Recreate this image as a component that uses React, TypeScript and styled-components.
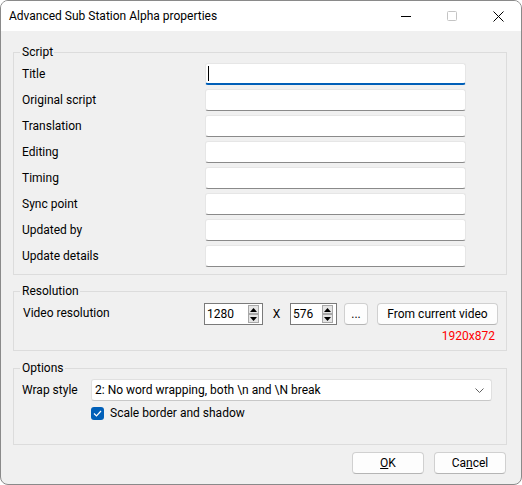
import React from "react";
import styled, { createGlobalStyle } from "styled-components";

const Global = createGlobalStyle`
  html, body { margin: 0; padding: 0; background: #ffffff; }
  body {
    font-family: Roboto, "Noto Sans", "Segoe UI", sans-serif;
    font-size: 12px;
    color: #000000;
  }
  * { box-sizing: border-box; }
`;

const Window = styled.div`
  width: 522px;
  height: 485px;
  display: flex;
  flex-direction: column;
  background: #f0f0f0;
  border: 1px solid #8a8a8a;
  border-radius: 8px;
  overflow: hidden;
`;

const TitleBar = styled.div`
  height: 30px;
  flex: none;
  display: flex;
  align-items: center;
  background: #ffffff;
`;

const TitleText = styled.div`
  flex: 1;
  padding-left: 8px;
  font-size: 12px;
  line-height: 16px;
`;

const CaptionButton = styled.div`
  width: 46px;
  height: 30px;
  display: flex;
  align-items: center;
  justify-content: center;
`;

const Body = styled.div`
  flex: 1;
  display: flex;
  flex-direction: column;
  padding: 13px 14px 0 12px;
`;

const Group = styled.fieldset<{ $pt: number; $pb: number; $mt?: number }>`
  margin: ${(p) => p.$mt ?? 0}px 0 0 0;
  padding: ${(p) => p.$pt}px 8px ${(p) => p.$pb}px 8px;
  border: 1px solid #dcdcdc;
  min-width: 0;
`;

const Legend = styled.legend`
  padding: 0 1px 0 2px;
  margin-left: -2px;
  line-height: 16px;
  font-size: 12px;
`;

const FormGrid = styled.div`
  display: grid;
  grid-template-columns: 183px 261px;
  grid-auto-rows: 22px;
  row-gap: 4px;
  align-items: center;
`;

const Label = styled.label`
  line-height: 16px;
  white-space: nowrap;
`;

const TextField = styled.div<{ $focused?: boolean }>`
  position: relative;
  height: 22px;
  background: #ffffff;
  border: 1px solid #e6e6e6;
  border-bottom: ${(p) => (p.$focused ? "2px solid #005fb8" : "1px solid #8a8a8a")};
  border-radius: 3px;
`;

const TextInput = styled.input`
  width: 100%;
  height: 100%;
  border: none;
  outline: none;
  background: transparent;
  padding: 0 3px;
  font: inherit;
  caret-color: transparent;
`;

const Caret = styled.span`
  position: absolute;
  left: 2px;
  top: 2px;
  width: 1px;
  height: 15px;
  background: #000000;
`;

const ResRow = styled.div`
  display: flex;
  align-items: center;
  height: 22px;
`;

const ResLabel = styled(Label)`
  width: 182px;
  padding-left: 1px;
  margin-top: -3px;
`;

const SpinBox = styled.div<{ $w: number }>`
  width: ${(p) => p.$w}px;
  height: 22px;
  display: flex;
  align-items: center;
  background: #ffffff;
  border: 1px solid #7a7a7a;
  padding: 0 3px 0 2px;
`;

const SpinValue = styled.span`
  flex: 1;
  line-height: 16px;
`;

const SpinArrows = styled.div`
  display: flex;
  flex-direction: column;
`;

const SpinArrow = styled.div`
  width: 11px;
  height: 9px;
  background: #e5e5e5;
  border: 1px solid #a8a8a8;
  display: flex;
  align-items: center;
  justify-content: center;
`;

const Times = styled.span`
  width: 27px;
  text-align: center;
  line-height: 16px;
`;

const Button = styled.button<{ $w: number; $ml?: number }>`
  width: ${(p) => p.$w}px;
  height: 22px;
  margin-left: ${(p) => p.$ml ?? 0}px;
  padding: 0;
  background: #fdfdfd;
  border: 1px solid #d0d0d0;
  border-bottom-color: #b5b5b5;
  border-radius: 4px;
  font: inherit;
  color: #000000;
  line-height: 16px;
`;

const ResNote = styled.div`
  margin-top: 3px;
  padding-right: 3px;
  text-align: right;
  color: #ff0000;
  line-height: 16px;
`;

const OptRow = styled.div`
  display: flex;
  align-items: center;
  height: 22px;
`;

const OptLabel = styled(Label)`
  width: 69px;
`;

const Combo = styled.div`
  width: 401px;
  height: 22px;
  display: flex;
  align-items: center;
  justify-content: space-between;
  padding: 0 7px 0 3px;
  background: #ffffff;
  border: 1px solid #e0e0e0;
  border-bottom-color: #c8c8c8;
  border-radius: 3px;
`;

const CheckRow = styled.label`
  display: flex;
  align-items: center;
  gap: 6px;
  margin: 4px 0 0 69px;
  line-height: 16px;
`;

const CheckBox = styled.span`
  width: 13px;
  height: 13px;
  border-radius: 3px;
  background: #005fb8;
  display: flex;
  align-items: center;
  justify-content: center;
`;

const Footer = styled.div`
  display: flex;
  justify-content: flex-end;
  gap: 10px;
  margin-top: 7px;
  padding-right: 1px;
`;

const Underlined = styled.span`
  text-decoration: underline;
`;

const scriptFields = [
  "Title",
  "Original script",
  "Translation",
  "Editing",
  "Timing",
  "Sync point",
  "Updated by",
  "Update details",
];

const Up = () => (
  <svg width="7" height="4" viewBox="0 0 7 4">
    <path d="M0 4 L3.5 0 L7 4 Z" fill="#000" />
  </svg>
);
const Down = () => (
  <svg width="7" height="4" viewBox="0 0 7 4">
    <path d="M0 0 L3.5 4 L7 0 Z" fill="#000" />
  </svg>
);

function Spin({ value, w }: { value: string; w: number }) {
  return (
    <SpinBox $w={w}>
      <SpinValue>{value}</SpinValue>
      <SpinArrows>
        <SpinArrow>
          <Up />
        </SpinArrow>
        <SpinArrow>
          <Down />
        </SpinArrow>
      </SpinArrows>
    </SpinBox>
  );
}

export default function App() {
  return (
    <>
      <Global />
      <Window>
        <TitleBar>
          <TitleText>Advanced Sub Station Alpha properties</TitleText>
          <CaptionButton>
            <svg width="10" height="10" viewBox="0 0 10 10">
              <path d="M0 5.5 H10" stroke="#000" strokeWidth="1" />
            </svg>
          </CaptionButton>
          <CaptionButton>
            <svg width="10" height="10" viewBox="0 0 10 10">
              <rect x="0.5" y="0.5" width="9" height="9" rx="1" fill="none" stroke="#c4c4c4" />
            </svg>
          </CaptionButton>
          <CaptionButton>
            <svg width="11" height="11" viewBox="0 0 11 11">
              <path d="M0.5 0.5 L10.5 10.5 M10.5 0.5 L0.5 10.5" stroke="#000" strokeWidth="1" />
            </svg>
          </CaptionButton>
        </TitleBar>
        <Body>
          <Group $pt={3} $pb={7}>
            <Legend>Script</Legend>
            <FormGrid>
              {scriptFields.map((f, i) => (
                <React.Fragment key={f}>
                  <Label>{f}</Label>
                  <TextField $focused={i === 0}>
                    <TextInput />
                    {i === 0 && <Caret />}
                  </TextField>
                </React.Fragment>
              ))}
            </FormGrid>
          </Group>
          <Group $pt={4} $pb={6} $mt={8}>
            <Legend>Resolution</Legend>
            <ResRow>
              <ResLabel>Video resolution</ResLabel>
              <Spin value="1280" w={59} />
              <Times>X</Times>
              <Spin value="576" w={47} />
              <Button $w={24} $ml={7}>...</Button>
              <Button $w={121} $ml={9}>From current video</Button>
            </ResRow>
            <ResNote>1920x872</ResNote>
          </Group>
          <Group $pt={3} $pb={23} $mt={9}>
            <Legend>Options</Legend>
            <OptRow>
              <OptLabel>Wrap style</OptLabel>
              <Combo>
                <span>2: No word wrapping, both \n and \N break</span>
                <svg width="9" height="5" viewBox="0 0 9 5">
                  <path d="M0.5 0.5 L4.5 4.5 L8.5 0.5" fill="none" stroke="#606060" strokeWidth="1" />
                </svg>
              </Combo>
            </OptRow>
            <CheckRow>
              <CheckBox>
                <svg width="9" height="7" viewBox="0 0 9 7">
                  <path d="M1 3.5 L3.5 6 L8 1" fill="none" stroke="#fff" strokeWidth="1.2" />
                </svg>
              </CheckBox>
              Scale border and shadow
            </CheckRow>
          </Group>
          <Footer>
            <Button $w={72}>
              <Underlined>O</Underlined>K
            </Button>
            <Button $w={72}>
              Ca<Underlined>n</Underlined>cel
            </Button>
          </Footer>
        </Body>
      </Window>
    </>
  );
}
